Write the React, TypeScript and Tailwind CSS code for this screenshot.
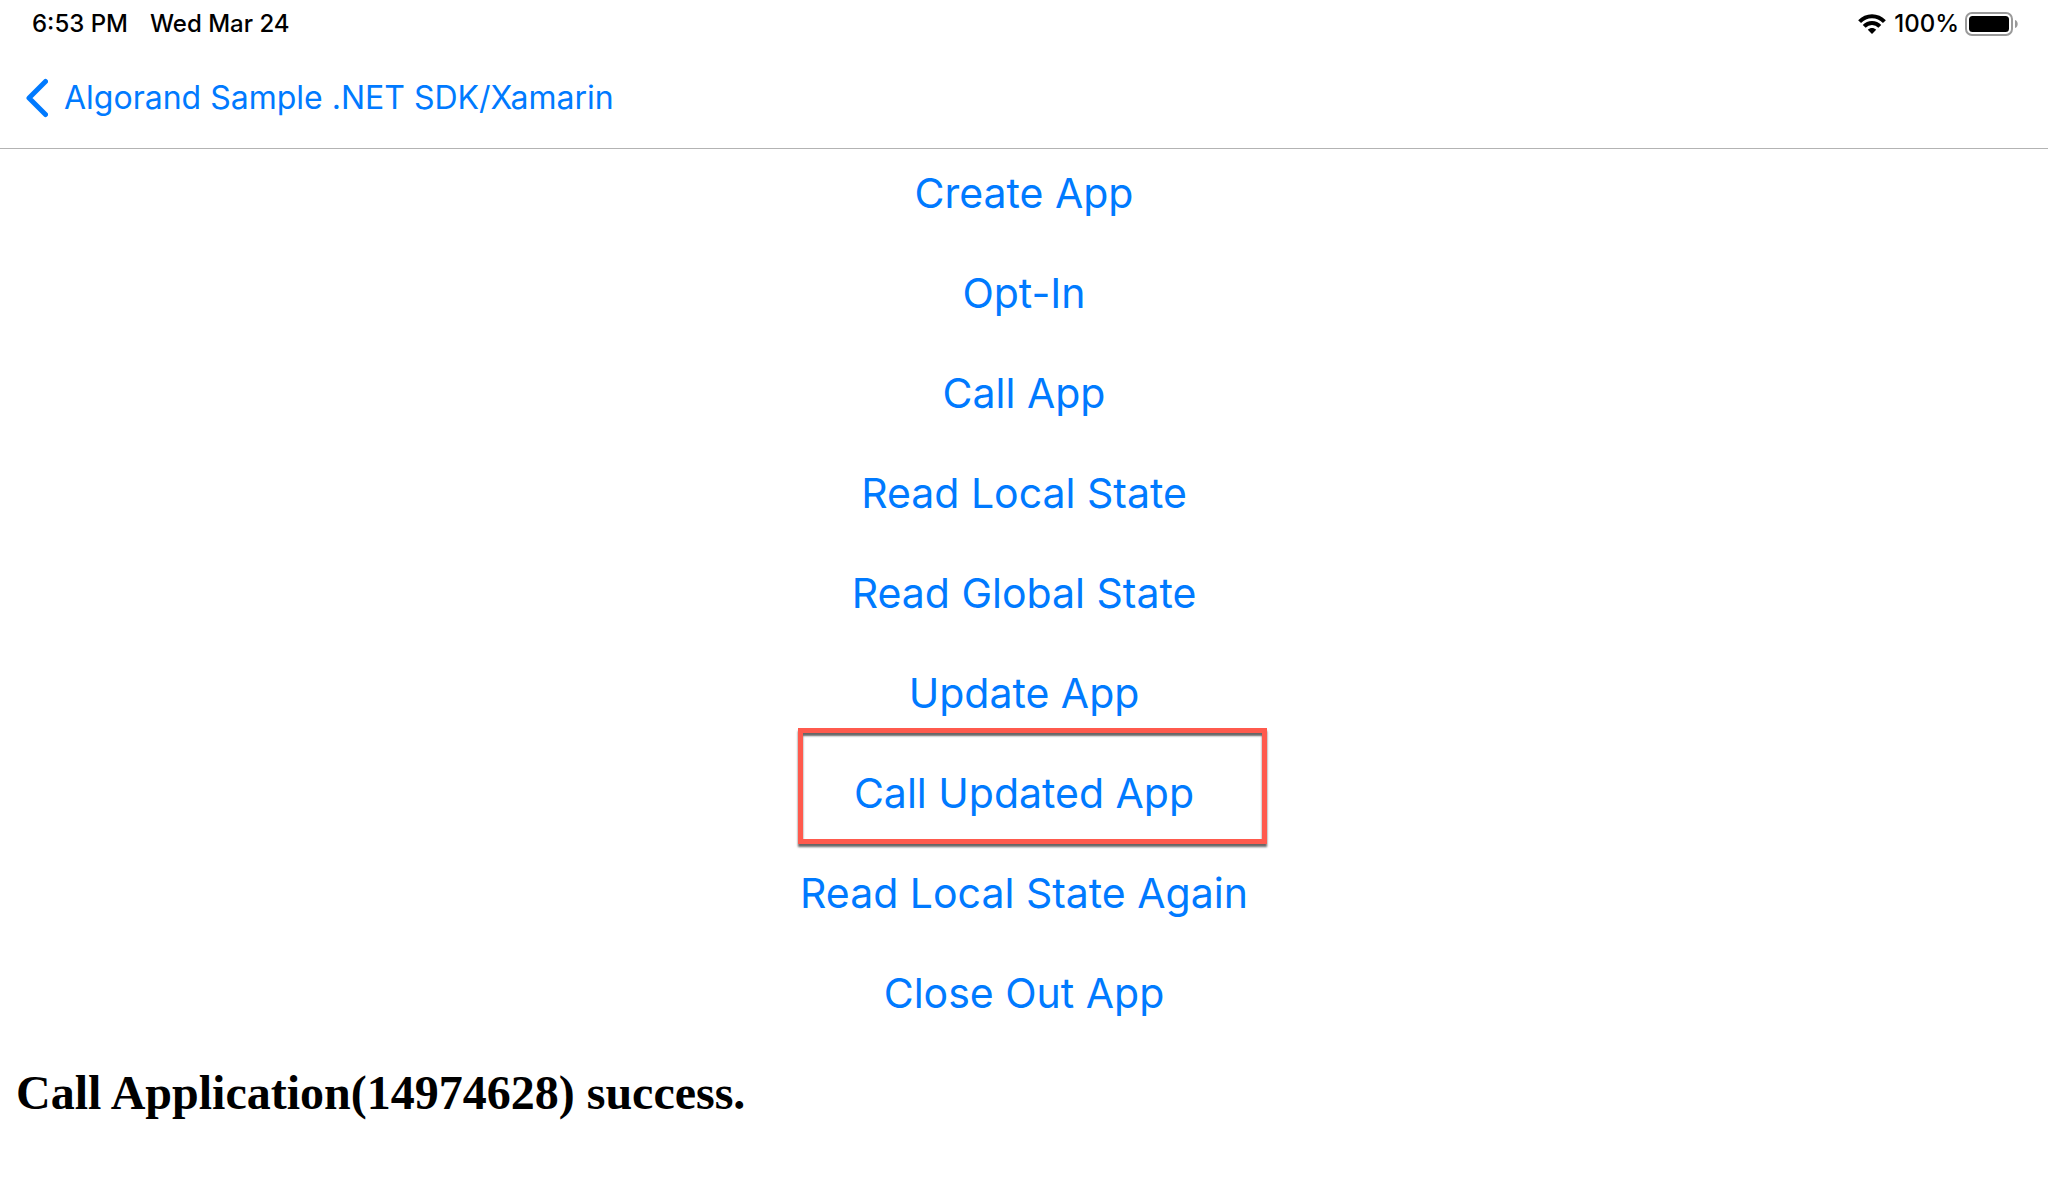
import React from 'react';

const actions = [
  'Create App',
  'Opt-In',
  'Call App',
  'Read Local State',
  'Read Global State',
  'Update App',
  'Call Updated App',
  'Read Local State Again',
  'Close Out App',
];

const highlighted = 'Call Updated App';

function StatusBar() {
  return (
    <div className="flex h-12 items-center justify-between pl-8 pr-[30px] text-2xl font-medium text-black">
      <div className="flex gap-[22px]">
        <span>6:53 PM</span>
        <span>Wed Mar 24</span>
      </div>
      <div className="flex items-center gap-[6px]">
        <div className="flex items-center gap-2">
          <svg width="28" height="20" viewBox="0 0 28 20" fill="none" stroke="#000" strokeWidth="4" aria-hidden="true">
            <path d="M1.6 7.6C8.4 0.4 19.6 0.4 26.4 7.6" />
            <path d="M6.2 12.4C10.4 8 17.6 8 21.8 12.4" />
            <path d="M14 20L9.8 15.8C12.2 13.4 15.8 13.4 18.2 15.8Z" fill="#000" stroke="none" />
          </svg>
          <span>100%</span>
        </div>
        <svg width="53" height="24" viewBox="0 0 53 24" aria-hidden="true">
          <rect x="1" y="1" width="46" height="22" rx="6" fill="none" stroke="#9a9a9a" strokeWidth="2" />
          <rect x="4" y="4" width="40" height="16" rx="3.5" fill="#000" />
          <path d="M50 8C53.6 9 53.6 15 50 16Z" fill="#9a9a9a" />
        </svg>
      </div>
    </div>
  );
}

export default function App() {
  return (
    <div className="min-h-screen bg-white font-['Inter',sans-serif] text-[#007aff]">
      <StatusBar />
      <nav className="flex h-[101px] items-center border-b border-[#b3b3b3] pl-6">
        <a href="#" className="flex items-center gap-4 text-[32px] leading-10">
          <svg width="24" height="40" viewBox="0 0 24 40" fill="none" stroke="currentColor" strokeWidth="5" strokeLinecap="round" strokeLinejoin="round" aria-hidden="true">
            <path d="M21.5 3.5L5 20L21.5 36.5" />
          </svg>
          Algorand Sample .NET SDK/Xamarin
        </a>
      </nav>
      <main>
        <div className="flex flex-col items-center gap-3 text-[41px] leading-[88px]">
          {actions.map((label) => (
            <button key={label} type="button" className="relative w-[452px] whitespace-nowrap">
              {label}
              {label === highlighted && (
                <span className="pointer-events-none absolute -top-[21px] -right-[17px] -bottom-[7px] left-0 border-[5px] border-[#ff5a4d] shadow-[0_3px_2px_rgba(0,0,0,0.6),inset_0_3px_2px_rgba(0,0,0,0.6)]" />
              )}
            </button>
          ))}
        </div>
        <h1 className="mt-8 px-4 font-['Liberation_Serif',serif] text-5xl font-bold text-black">
          Call Application(14974628) success.
        </h1>
      </main>
    </div>
  );
}
